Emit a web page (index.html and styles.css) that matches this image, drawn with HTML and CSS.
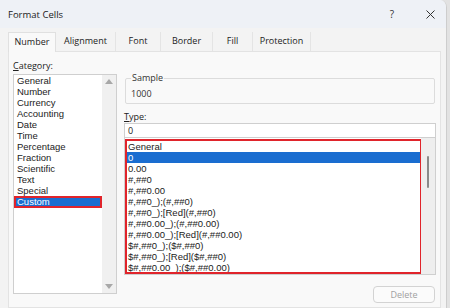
FILE: index.html
```html
<!DOCTYPE html>
<html>
<head>
	<meta charset="utf-8" />
	<title>Format Cells</title>
	<link rel="stylesheet" href="styles.css">
</head>
<body>
	<div class="dialog">
		<div class="titlebar">
			<span class="title">Format Cells</span>
			<span class="help">?</span>
			<span class="close">
				<svg width="9" height="9" viewBox="0 0 9 9"><path d="M0.5 0.5 L8.5 8.5 M8.5 0.5 L0.5 8.5" stroke="#333" stroke-width="1"/></svg>
			</span>
		</div>
		<div class="tabs">
			<div class="tab active t-number">Number</div>
			<div class="tab t-align">Alignment</div>
			<div class="tab t-font">Font</div>
			<div class="tab t-border">Border</div>
			<div class="tab t-fill">Fill</div>
			<div class="tab t-prot">Protection</div>
		</div>
		<div class="panel">
			<div class="left">
				<div class="label"><u>C</u>ategory:</div>
				<div class="listbox cat">
					<ul class="items">
						<li>General</li>
						<li>Number</li>
						<li>Currency</li>
						<li>Accounting</li>
						<li>Date</li>
						<li>Time</li>
						<li>Percentage</li>
						<li>Fraction</li>
						<li>Scientific</li>
						<li>Text</li>
						<li>Special</li>
						<li class="selected marked">Custom</li>
					</ul>
					<div class="vscroll">
						<span class="arrow up"></span>
						<span class="arrow down"></span>
					</div>
				</div>
			</div>
			<div class="right">
				<fieldset class="sample">
					<legend>Sample</legend>
					<div class="sample-val">1000</div>
				</fieldset>
				<div class="label type-label"><u>T</u>ype:</div>
				<div class="input">0</div>
				<div class="listbox types">
					<ul class="items marked-box">
						<li>General</li>
						<li class="selected">0</li>
						<li>0.00</li>
						<li>#,##0</li>
						<li>#,##0.00</li>
						<li>#,##0_);(#,##0)</li>
						<li>#,##0_);[Red](#,##0)</li>
						<li>#,##0.00_);(#,##0.00)</li>
						<li>#,##0.00_);[Red](#,##0.00)</li>
						<li>$#,##0_);($#,##0)</li>
						<li>$#,##0_);[Red]($#,##0)</li>
						<li>$#,##0.00_);($#,##0.00)</li>
					</ul>
					<div class="vscroll">
						<span class="thumb"></span>
					</div>
				</div>
				<div class="actions">
					<button class="btn" disabled>Delete</button>
				</div>
			</div>
		</div>
	</div>
</body>
</html>
```

FILE: styles.css
```css
*{
	padding: 0px;
	margin: 0px;
	box-sizing: border-box;
}
body{
	width: 450px;
	height: 308px;
	overflow: hidden;
	background: #e2e2e2;
	font-family: "Open Sans", "Noto Sans", sans-serif;
	font-size: 9px;
	color: #1b1b1b;
}
ul,li{
	list-style: none;
}
.dialog{
	width: 447px;
	height: 308px;
	background: #f3f3f3;
	border-right: 1px solid #cdcdcd;
	border-top-right-radius: 7px;
	overflow: hidden;
	display: flex;
	flex-direction: column;
}
.titlebar{
	height: 28px;
	flex: none;
	background: #eef1f6;
	display: flex;
	align-items: center;
	padding-left: 8px;
	padding-right: 6px;
}
.title{
	flex: 1;
	font-size: 9.5px;
	color: #202020;
}
.help{
	width: 20px;
	text-align: center;
	font-size: 10px;
	color: #333;
	margin-right: 18px;
}
.close{
	width: 20px;
	height: 9px;
	display: flex;
	justify-content: center;
}
.tabs{
	display: flex;
	height: 19px;
	flex: none;
	margin-top: 4px;
	padding-left: 8px;
	position: relative;
	z-index: 1;
}
.tab{
	height: 19px;
	line-height: 18px;
	text-align: center;
	color: #222;
	border-right: 1px solid #e4e4e4;
}
.tab.active{
	background: #f9f9f9;
	border: 1px solid #e0e0e0;
	border-bottom: none;
	height: 20px;
}
.t-number{ width: 48px; }
.t-align{ width: 60px; }
.t-font{ width: 45px; }
.t-border{ width: 52px; }
.t-fill{ width: 40px; }
.t-prot{ width: 58px; }
.panel{
	flex: 1;
	margin: 0 5px 0 8px;
	background: #f9f9f9;
	border: 1px solid #e3e3e3;
	display: flex;
	gap: 7px;
	padding: 0 4px 0 4px;
}
.left{
	width: 104px;
	padding-top: 7px;
}
.label{
	line-height: 13px;
	height: 13px;
	color: #222;
}
.listbox{
	display: flex;
	background: #fff;
	border: 1px solid #cfcfcf;
}
.cat{
	margin-top: 2px;
	height: 220px;
}
.items{
	flex: 1;
	font-family: "Liberation Sans", Arial, sans-serif;
	font-size: 9.5px;
}
.items li{
	line-height: 11px;
	height: 11px;
	white-space: nowrap;
}
.cat .items li{
	padding-left: 3px;
}
.items li.selected{
	background: #1a6dd0;
	color: #fff;
}
.cat .items li.marked{
	height: 12px;
	line-height: 12px;
	box-shadow: inset 0 0 0 2px #e0242b;
}
.vscroll{
	width: 14px;
	background: #f0f0f0;
	display: flex;
	flex-direction: column;
	align-items: center;
}
.arrow{
	width: 0;
	height: 0;
	border-left: 4px solid transparent;
	border-right: 4px solid transparent;
}
.arrow.up{
	margin-top: 4px;
	border-bottom: 5px solid #a8a8a8;
}
.arrow.down{
	margin-top: auto;
	margin-bottom: 4px;
	border-top: 5px solid #a8a8a8;
}
.right{
	flex: 1;
	padding-top: 20px;
	display: flex;
	flex-direction: column;
}
.sample{
	border: 1px solid #dcdcdc;
	border-radius: 2px;
	padding: 4px 4px 3px 5px;
	margin-left: 1px;
	margin-right: 1px;
}
.sample legend{
	padding: 0 1px;
	line-height: 12px;
	color: #333;
}
.sample-val{
	line-height: 12px;
	color: #333;
}
.type-label{
	margin-top: 7px;
	line-height: 12px;
	height: 12px;
}
.input{
	height: 15px;
	background: #fff;
	border: 1px solid #cfcfcf;
	line-height: 13px;
	padding-left: 3px;
}
.types{
	height: 137px;
	border-top: none;
}
.types .items{
	margin-top: 1px;
	border: 2px solid #e0242b;
	border-right-width: 1px;
	overflow: hidden;
}
.types .items li{
	padding-left: 1px;
}
.types .vscroll{
	align-items: flex-start;
	padding-left: 6px;
	background: #eeeeee;
}
.thumb{
	display: block;
	width: 2px;
	height: 32px;
	margin-top: 18px;
	background: #8a8a8a;
	border-radius: 1px;
}
.actions{
	display: flex;
	justify-content: flex-end;
	margin-top: 11px;
	padding-right: 1px;
}
.btn{
	width: 62px;
	height: 17px;
	font-family: inherit;
	font-size: 9px;
	color: #a0a0a0;
	background: #fbfbfb;
	border: 1px solid #d3d3d3;
	border-radius: 4px;
}
```
